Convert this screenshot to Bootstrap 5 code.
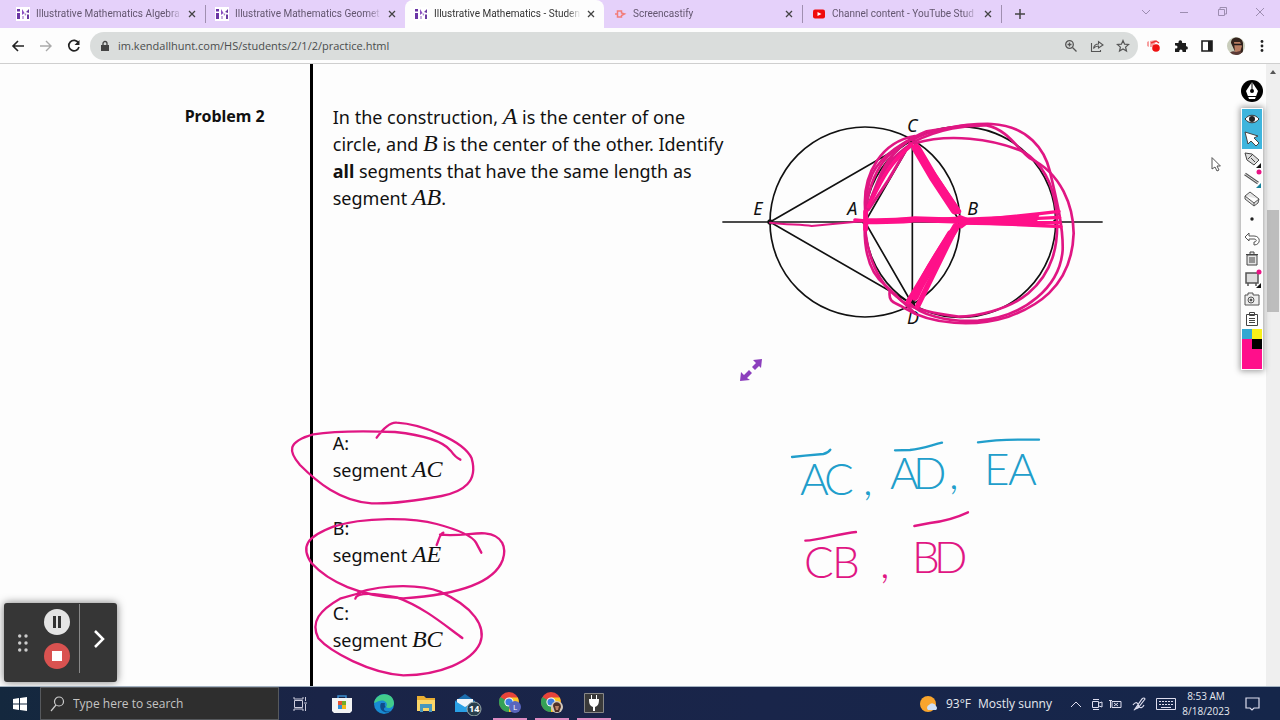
<!DOCTYPE html>
<html lang="en">
<head>
<meta charset="utf-8">
<meta name="viewport" content="width=device-width, initial-scale=1">
<title>Illustrative Mathematics - Students | Kendall Hunt</title>
<link rel="stylesheet" href="https://cdn.jsdelivr.net/npm/bootstrap@5.3.0/dist/css/bootstrap.min.css">
<script src="https://cdn.jsdelivr.net/npm/bootstrap@5.3.0/dist/js/bootstrap.bundle.min.js"></script>
<style>
  body { font-family: "Noto Sans", sans-serif; color: #111; background: #fdfdfd; }
  button { border: 0; background: none; padding: 0; color: inherit; display: inline-flex; align-items: center; justify-content: center; }
  svg { display: block; flex: none; }

  .tabstrip { background: #e5d1fa; height: 28px; padding-left: 7px; }
  .tabitem { flex: 0 0 199px; min-width: 0; padding: 0 5px 0 9px; font: 10px/28px Roboto, sans-serif; }
  .tabitem a { color: #63566f; text-decoration: none; overflow: hidden; white-space: nowrap; margin: 0 2px 0 6px; flex: 1 1 0; min-width: 0; -webkit-mask-image: linear-gradient(90deg, #000 90%, transparent); mask-image: linear-gradient(90deg, #000 90%, transparent); }
  .tabitem.current { background: #fdfdfd; border-radius: 8px 8px 0 0; }
  .tabitem.current a { color: #333; }
  .tabitem.ruled { border-right: 1px solid #a08fb0; border-image: linear-gradient(transparent 20%, #a08fb0 20%, #a08fb0 80%, transparent 80%) 1; }
  .tabitem button { width: 16px; height: 16px; color: #444; }
  .winbtns { gap: 22px; padding-right: 12px; color: #9d8db0; }
  .winbtns button { width: 16px; height: 16px; }

  .toolbar { height: 36px; padding: 0 10px; border-bottom: 1px solid #cfcfcf; color: #222; }
  .address { background: #dadddc; border-radius: 14px; height: 28px; padding: 0 8px 0 10px; margin-left: 8px; color: #555; }
  .address input { border: 0; background: none; outline: 0; font: 11px/20px "Open Sans", sans-serif; color: #4a4d4d; min-width: 0; padding: 0; }

  .page { min-height: 0; }
  .sidecol { flex: 0 0 24.2%; padding: 40px 45px 0 0; text-align: right; font: 700 16px/25px "Noto Sans", sans-serif; }
  .bodycol { border-left: 3px solid #000; padding: 40px 0 0 20px; font-size: 18px; line-height: 27px; min-width: 0; }
  .question { flex: 0 0 400px; margin: 0 -11px 0 0; }
  .statement { min-height: 326px; }
  .choices li { margin-bottom: 31px; }
  .math { font: italic 24px/20px "Liberation Serif", serif; }
  .scroller { flex: 0 0 14px; background: #efefef; padding: 5px 1px; }
  .thumb { height: 102px; background: #bdbdbd; margin-top: 136px; }
  .ink { inset: 0; width: 100%; pointer-events: none; }

  .pens { top: 14px; right: 17px; width: 22px; }
  .palette { background: #fdfdfd; box-shadow: 0 0 6px 1px #999; padding: 1px; }
  .palette button { width: 20px; height: 20px; color: #444; }
  .palette .on { background: #3eb5dd; }
  .swatches { display: grid; grid-template-columns: 10px 10px; grid-auto-rows: 10px; background: #ff0f8b; height: 40px; }

  .recorder { left: 4px; bottom: 4px; width: 113px; height: 79px; background: #363636; border-radius: 3px; box-shadow: 0 0 9px #777; }
  .recorder .grip { margin: 0 16px 0 14px; }
  .recorder .controls { padding: 5px 9px 4px 0; margin: 0 13px 8px 0; border-right: 1px solid #888; }
  .recorder .round { width: 26px; height: 26px; border-radius: 50%; background: #e4e4e4; }
  .recorder .stop { background: #d95250; }

  .taskbar { background: linear-gradient(90deg, #14283e, #1a2447 25%, #19254a 60%, #15264a); height: 34px; border-top: 1px solid #a4b3c2; color: #e6e9ef; }
  .startbtn { width: 40px; height: 33px; }
  .searchbox { width: 239px; height: 33px; background: #2e2e2e; border: 1px solid #56595d; padding-left: 8px; }
  .searchbox input { border: 0; background: none; outline: 0; color: #ddd; font: 12px/20px "Open Sans", sans-serif; width: 180px; margin-left: 8px; padding: 0; }
  .searchbox input::placeholder { color: #c4c4c4; opacity: 1; }
  .app { width: 42px; height: 33px; padding: 0 4px; }
  .app button { width: 34px; height: 33px; }
  .app.open button { border-bottom: 2px solid #dd8bc1; }
  .weather { font: 12px/20px "Open Sans", sans-serif; gap: 7px; margin-right: 18px; }
  .tray { gap: 5px; margin-right: 3px; }
  .clock { font: 10px/15px "Open Sans", sans-serif; width: 54px; }
  .notice { margin: 0 20px 0 12px; }
</style>
</head>
<body class="vh-100 d-flex flex-column overflow-hidden">
<svg width="0" height="0" class="position-absolute" aria-hidden="true">
  <symbol id="im" viewBox="0 0 14 14"><path fill="#fff" d="M0 0h14v14H0z"/><path fill="#6a35a5" d="M1 6h3v6H1zM1 2h3v2.500H1z"/><path fill="#8b4fc0" d="M6 2l2.500 4L6 8z"/><path fill="#c9b0e0" d="M6 9h2v3H6z"/><path fill="#6a3a9f" d="M13 2v4l-3-1zM11 7.500h2V12h-2z"/><path fill="#a57fcb" d="m8.500 6 2 1-1.500 2z"/></symbol>
  <symbol id="cross" viewBox="0 0 8 8"><path d="m1 1 6 6M7 1 1 7" fill="none" stroke="currentColor" stroke-width="1.300"/></symbol>
  <symbol id="chrome" viewBox="0 0 20 20"><circle cx="10" cy="10" r="10" fill="#e7443a"/><path d="M10 10 1.300 5A10 10 0 0 0 10 20l5-8z" fill="#35a156"/><path d="M10 10 10 20A10 10 0 0 0 18.700 5.500H10z" fill="#fbc926"/><circle cx="10" cy="10" r="4.600" fill="#fff"/><circle cx="10" cy="10" r="3.600" fill="#3d7de0"/></symbol>
</svg>

<nav class="tabstrip d-flex align-items-stretch" aria-label="Tabs">
  <div class="tabitem ruled d-flex align-items-center"><svg width="14" height="14"><use href="#im"/></svg><a href="#">Illustrative Mathematics Algebra</a><button aria-label="Close tab"><svg width="8" height="8"><use href="#cross"/></svg></button></div>
  <div class="tabitem d-flex align-items-center"><svg width="14" height="14"><use href="#im"/></svg><a href="#">Illustrative Mathematics Geomet</a><button aria-label="Close tab"><svg width="8" height="8"><use href="#cross"/></svg></button></div>
  <div class="tabitem current d-flex align-items-center"><svg width="14" height="14"><use href="#im"/></svg><a href="#">Illustrative Mathematics - Studen</a><button aria-label="Close tab"><svg width="8" height="8"><use href="#cross"/></svg></button></div>
  <div class="tabitem ruled d-flex align-items-center"><svg width="14" height="14" fill="none" stroke="#f27d79" stroke-width="1.500"><path d="M4.500 4h4v2l3 1-3 1.500V10h-4zM2 7h2"/></svg><a href="#">Screencastify</a><button aria-label="Close tab"><svg width="8" height="8"><use href="#cross"/></svg></button></div>
  <div class="tabitem ruled d-flex align-items-center"><svg width="14" height="14"><rect x="1" y="2.500" width="12" height="9" rx="2" fill="#f00b0b"/><path d="m5.500 5 4 2-4 2z" fill="#fff"/></svg><a href="#">Channel content - YouTube Stud</a><button aria-label="Close tab"><svg width="8" height="8"><use href="#cross"/></svg></button></div>
  <button class="ms-2 px-1" aria-label="New tab"><svg width="12" height="12" stroke="#444" stroke-width="1.500"><path d="M6 1v10M1 6h10"/></svg></button>
  <div class="winbtns ms-auto d-flex align-items-center pb-1">
    <button aria-label="Search tabs"><svg width="10" height="10" fill="none" stroke="currentColor"><path d="m1 3 4 4 4-4"/></svg></button>
    <button aria-label="Minimize"><svg width="10" height="10" stroke="currentColor"><path d="M1 5.500h8"/></svg></button>
    <button aria-label="Restore"><svg width="10" height="10" fill="none" stroke="currentColor"><path d="M1.500 2.500h6v6h-6zM3 2V.5h6.500V7H8"/></svg></button>
    <button aria-label="Close window"><svg width="10" height="10" stroke="currentColor"><path d="m1 1 8 8M9 1 1 9"/></svg></button>
  </div>
</nav>

<div class="toolbar d-flex align-items-center">
  <button class="me-2" aria-label="Back"><svg width="16" height="16" fill="none" stroke="#222" stroke-width="1.600"><path d="M14 8H3M8 3 3 8l5 5"/></svg></button>
  <button class="ms-1 me-2" aria-label="Forward"><svg width="16" height="16" fill="none" stroke="#aaa" stroke-width="1.400"><path d="M2 8h11M8 3l5 5-5 5"/></svg></button>
  <button class="ms-1" aria-label="Reload"><svg width="16" height="16" fill="none" stroke="#222" stroke-width="1.700"><path d="M12.500 5A5.200 5.200 0 1 0 13 9"/><path d="M13.500 2v5h-5z" fill="#222" stroke="none"/></svg></button>
  <div class="address d-flex align-items-center flex-grow-1 gap-2">
    <svg width="10" height="12"><path d="M1 5h8v6H1z" fill="#444"/><path d="M3 5V3.500a2 2 0 0 1 4 0V5" fill="none" stroke="#444" stroke-width="1.300"/></svg>
    <input class="flex-grow-1" aria-label="Address" value="im.kendallhunt.com/HS/students/2/1/2/practice.html">
    <button class="me-1" aria-label="Zoom"><svg width="14" height="14" fill="none" stroke="currentColor" stroke-width="1.300"><circle cx="5.500" cy="5.500" r="3.800"/><path d="m8.500 8.500 4 4M3.500 5.500h4M5.500 3.500v4"/></svg></button>
    <button class="me-1" aria-label="Share"><svg width="14" height="14" fill="none" stroke="currentColor" stroke-width="1.100"><path d="M1.500 4v8.500h9V11M3.500 9.500c.5-3 2.500-4.500 5-4.500V2.500L13 6 8.500 9V7c-2 0-3.500.5-5 2.500z"/></svg></button>
    <button aria-label="Bookmark"><svg width="14" height="14" fill="none" stroke="currentColor" stroke-width="1.200"><path d="m7 1.500 1.600 3.700 4 .3-3 2.600.9 4L7 10l-3.500 2.100.9-4-3-2.600 4-.3z"/></svg></button>
  </div>
  <div class="d-flex align-items-center ms-2 gap-2">
    <button class="me-1" aria-label="Recording extension"><svg width="16" height="16"><path d="m1 4 2-1v6L1 8zM4 3l5-1 1 2-4 5-2 0z" fill="#f7a0a0"/><path d="m5 5 5-2 3 2" stroke="#e33" fill="none" stroke-width="1.500"/><circle cx="10" cy="10" r="3.800" fill="#ee1212"/></svg></button>
    <button class="me-1" aria-label="Extensions"><svg width="14" height="14" fill="#1d1d1d"><path d="M1 4h3.500V3a1.800 1.800 0 0 1 3.600 0v1H12v3.300h.3a1.600 1.600 0 0 1 0 3.200H12V13H8.500v-1a1.600 1.600 0 0 0-3.200 0v1H1V9.500h1a1.500 1.500 0 0 0 0-3H1z"/></svg></button>
    <button class="me-1" aria-label="Side panel"><svg width="14" height="14"><path d="M2 2h10v10H2z" fill="none" stroke="#1d1d1d" stroke-width="1.600"/><path d="M8 2h4v10H8z" fill="#1d1d1d"/></svg></button>
    <button aria-label="Profile"><svg width="20" height="20"><clipPath id="face"><circle cx="10" cy="10" r="9"/></clipPath><g clip-path="url(#face)"><path fill="#c9cdbb" d="M0 0h20v20H0z"/><path fill="#34241d" d="M5 7c0-8 13-7 12 2v11h-6z"/><path fill="#b97d61" d="M8 6h6l2 4-2 6H9z"/><path stroke="#211b1a" stroke-width="1.500" d="M8 8.500h8"/><path fill="#5b3a36" d="M3 20c1-6 5-5 7-4l4-1 6 5z"/></g></svg></button>
    <button aria-label="Menu"><svg width="16" height="16" fill="#222"><circle cx="8" cy="3.500" r="1.400"/><circle cx="8" cy="8" r="1.400"/><circle cx="8" cy="12.500" r="1.400"/></svg></button>
  </div>
</div>

<main class="page position-relative flex-grow-1 d-flex overflow-hidden">
  <h2 class="sidecol mb-0">Problem 2</h2>
  <section class="bodycol flex-grow-1">
    <div class="statement d-flex">
      <p class="question">In the construction, <span class="math">A</span> is the center of one circle, and <span class="math">B</span> is the center of the other. Identify <strong>all</strong> segments that have the same length as segment <span class="math">AB</span>.</p>
      <svg width="381" height="240" viewBox="21 12 1143 720" role="img" aria-label="Two overlapping circles centered at A and B" fill="none" stroke="#111" stroke-width="5">
        <circle cx="450" cy="366" r="285"/><circle cx="736" cy="366" r="286"/>
        <path d="M22 366H1163M592 120V612M165 366 592 120 450 366 592 612zM592 120 735 366 592 612"/>
        <g fill="#111" stroke="none"><circle cx="165" cy="366" r="8"/><circle cx="450" cy="366" r="8"/><circle cx="592" cy="120" r="8"/><circle cx="592" cy="612" r="8"/><circle cx="1022" cy="366" r="8"/>
        <g font-family="Noto Sans, sans-serif" font-style="italic" font-size="54"><text x="576" y="97">C</text><text x="115" y="345">E</text><text x="397" y="345">A</text><text x="757" y="345">B</text><text x="576" y="673">D</text></g></g>
      </svg>
    </div>
    <ul class="choices list-unstyled mb-0">
      <li>A:<br>segment <span class="math">AC</span></li>
      <li>B:<br>segment <span class="math">AE</span></li>
      <li>C:<br>segment <span class="math">BC</span></li>
    </ul>
  </section>
  <div class="scroller" aria-hidden="true"><svg width="12" height="5"><path d="m3 5 3-4 3 4z" fill="#555"/></svg><div class="thumb"></div></div>

  <!-- Freehand pen annotations laid over the page -->
  <svg class="ink position-absolute" viewBox="0 64 1280 622" preserveAspectRatio="xMinYMin meet" fill="none" stroke="#e01683" stroke-linecap="round" stroke-linejoin="round">
    <g transform="translate(715 100) scale(.33333)" stroke-width="8">
      <path d="M592 120C640 92 740 70 830 72C940 78 990 150 1005 215C1025 300 1045 380 1043 450C1035 560 930 650 790 662C690 668 610 640 585 610"/>
      <path d="M592 128C670 85 760 75 815 76C880 90 905 145 945 175C1040 220 1075 320 1076 400C1070 570 950 625 880 650C780 682 650 675 570 625C540 605 520 610 524 575"/>
      <path d="M600 130C700 100 830 115 925 155C990 195 1015 260 1024 330C1035 440 1010 520 940 580C880 630 780 650 730 650C650 640 620 630 600 622"/>
      <path d="M600 108C500 125 445 220 450 320L452 400C460 470 490 550 545 590C570 615 590 620 610 626"/>
      <path d="M590 118C525 150 470 200 452 330C440 450 465 520 510 555L600 640"/>
      <path d="M455 330C450 240 480 190 535 150C565 130 590 112 635 94L750 76"/>
      <path d="M462 310C500 210 530 170 592 130M458 320C490 250 500 180 575 125M460 330 520 240 585 130" stroke-width="9"/>
      <path d="M165 368C220 375 260 372 290 378L440 364" stroke-width="6"/>
      <g stroke="#ff1089">
        <path d="M460 320C495 250 520 190 590 135M420 360C500 372 560 350 630 360L735 355" stroke-width="11"/>
        <path d="M460 364C530 362 560 364 600 358L740 362" stroke-width="18"/>
        <path d="M452 335V388" stroke-width="15"/>
        <path d="M600 142 730 334" stroke-width="17"/><path d="M604 145 655 232 720 330" stroke-width="27"/>
        <path d="M723 380C715 400 655 470 600 590" stroke-width="23"/><path d="M722 385 608 618M704 400 580 605" stroke-width="16"/>
        <path d="M735 352 760 362 738 378z" stroke-width="14"/>
        <path d="M740 364C850 355 940 345 1032 334M740 366 1038 380M740 366 1034 352M740 368 1034 368" stroke-width="10"/>
        <path d="M740 356 880 350 970 346 960 376 740 372z" fill="#ff1089" stroke-width="5"/>
      </g>
    </g>
    <g transform="translate(280 410) scale(.33333)" stroke-width="7">
      <path d="M290 83C310 55 330 36 350 38C420 42 550 90 575 145C595 215 550 245 485 258C420 270 330 282 275 280C180 275 110 215 60 165C25 125 20 95 100 73C180 60 290 64 345 66C430 75 490 95 512 122Q527 143 541 149"/>
      <path d="M470 405C478 385 480 370 490 368M480 374C540 380 580 367 615 370C670 375 680 415 668 450C640 525 520 555 370 565C240 560 145 515 95 460C60 410 80 380 160 350C250 320 400 322 470 342C530 358 575 375 588 398L604 428"/>
      <path d="M226 566C229 545 290 550 350 562C430 590 500 650 547 684M235 548C320 520 430 525 480 545C580 590 620 650 600 700C575 755 480 795 370 796C270 790 150 725 115 685C90 635 120 600 180 566L240 549"/>
    </g>
    <g transform="translate(780 425) scale(.33333)" stroke-width="7">
      <g stroke="#219ecb"><path d="M36 96 75 92 130 87Q145 84 151 74M345 76 390 75C430 70 455 60 486 53M594 52C650 44 710 43 777 44"/></g>
      <path d="M76 347C120 345 180 325 228 321M403 303 450 294C500 288 530 278 564 262"/>
    </g>
    <g font-family="Lato, sans-serif" font-weight="300" font-size="44" stroke="none">
      <g fill="#219ecb"><text x="800 824 863" y="495">AC,</text><text x="890 913 949" y="489">AD,</text><text x="984 1008" y="485">EA</text></g>
      <g fill="#e01683"><text x="804 832 880" y="578">CB,</text><text x="912 934" y="573">BD</text></g>
    </g>
    <path d="m740 381 1-9 3 3 5-5 3 3-5 5 3 2zM762 359l-9 1 3 3-4 4 3 3 4-4 2 2z" fill="#8c3fbd" stroke="none"/>
    <path d="m1212 158v11l3-2 2 4 2-1-2-4h3z" fill="#fff" stroke="#555"/>
  </svg>

  <aside class="pens position-absolute" aria-label="Drawing tools">
    <button class="mb-1" aria-label="Toggle drawing"><svg width="22" height="24"><circle cx="11" cy="13" r="11" fill="#000"/><path d="m11 4 6 9-3 8H8l-3-8z" fill="#fff"/><path d="M11 4v8M7 18.500h8" stroke="#000"/><circle cx="11" cy="13" r="2"/></svg></button>
    <div class="palette d-flex flex-column">
      <button class="on" aria-label="Show ink"><svg width="16" height="16"><path d="M1 8c4-5 10-5 14 0-4 5-10 5-14 0z" fill="#fff" stroke="#333"/><circle cx="8" cy="8" r="3" fill="#222"/></svg></button>
      <button class="on" aria-label="Select"><svg width="16" height="16"><path d="m1 1 3 12 3-3 5 5 3-3-5-5 4-2z" fill="#fff" stroke="#444"/></svg></button>
      <button aria-label="Pencil"><svg width="18" height="18" fill="#ddd" stroke="#444"><path d="m2 3 7 1 7 6-5 5-7-5zM5 9l5-5M8 8l4 4"/><path d="M18 13v5h-5z" fill="#111" stroke="none"/></svg></button>
      <button aria-label="Line"><svg width="20" height="20"><path d="m3 5 13 9" stroke="#555" stroke-width="3"/><path d="m3 5 13 9" stroke="#ddd"/><circle cx="17" cy="3" r="2.500" fill="#e91384"/><path d="M19 14v5h-5z" fill="#17829b"/></svg></button>
      <button aria-label="Eraser"><svg width="18" height="18" fill="#e4e4e4" stroke="#555"><path d="m2 6 5-4 9 7-1 4-4 3-9-7zM2 6l9 7 5-4M11 13v3"/></svg></button>
      <button aria-label="Line width"><svg width="6" height="6"><circle cx="3" cy="3" r="1.700" fill="#222"/></svg></button>
      <button aria-label="Undo"><svg width="18" height="16" fill="#fff" stroke="#555"><path d="M6 2 2 6l4 4V8h5c3 0 3 3 0 3v3c7 0 7-9 0-9H6z"/></svg></button>
      <button aria-label="Clear"><svg width="14" height="16" fill="#e4e4e4" stroke="#444"><path d="M2 4h10v10H2zM1 3.500h12M5 3V1h4v2M5 6v6M7 6v6M9 6v6"/></svg></button>
      <button aria-label="Whiteboard"><svg width="20" height="20" fill="#ddd" stroke="#555" stroke-width="1.500"><path d="M4 4h12v10H4zM6 14v3M14 14v3"/><circle cx="17" cy="3" r="2.500" fill="#e91384" stroke="none"/><path d="M19 14v5h-5z" fill="#111" stroke="none"/></svg></button>
      <button aria-label="Screenshot"><svg width="16" height="14" fill="#eee" stroke="#555"><path d="M1 3h3V1h5v2h6v10H1z"/><circle cx="7" cy="8" r="3"/><circle cx="7" cy="8" r="1" fill="#222"/></svg></button>
      <button aria-label="Clipboard"><svg width="14" height="16" fill="#fff" stroke="#444"><path d="M1.500 3.500h11v11h-11zM4.500 1.500h5v3h-5zM4 7.500h6M4 9.500h6M4 11.500h6"/></svg></button>
      <div class="swatches"><button class="w-100 h-100" style="background:#35a8d2" aria-label="Blue"></button><button class="w-100 h-100" style="background:#f8ef18" aria-label="Yellow"></button><button class="w-100 h-100" aria-label="Pink"></button><button class="w-100 h-100" style="background:#000" aria-label="Black"></button></div>
    </div>
  </aside>

  <aside class="recorder position-absolute d-flex align-items-center" aria-label="Screen recorder">
    <svg class="grip" width="10" height="20" fill="#ccc"><circle cx="1.700" cy="3" r="1.700"/><circle cx="8" cy="3" r="1.700"/><circle cx="1.700" cy="10" r="1.700"/><circle cx="8" cy="10" r="1.700"/><circle cx="1.700" cy="17" r="1.700"/><circle cx="8" cy="17" r="1.700"/></svg>
    <div class="controls d-flex flex-column gap-2">
      <button class="round" aria-label="Pause"><svg width="10" height="12" fill="#333"><path d="M1 0h3v12H1zM6 0h3v12H6z"/></svg></button>
      <button class="round stop" aria-label="Stop"><svg width="10" height="10"><path d="M0 0h10v10H0z" fill="#fff"/></svg></button>
    </div>
    <button class="mb-2" aria-label="Collapse"><svg width="12" height="20" fill="none" stroke="#fff" stroke-width="2.500"><path d="m2 2 8 8-8 8"/></svg></button>
  </aside>
</main>

<footer class="taskbar d-flex align-items-center flex-shrink-0">
  <button class="startbtn" aria-label="Start"><svg width="14" height="14" fill="#fff"><path d="m0 2 6-1v5.500H0zM7 1l7-1v6.500H7zM0 7.500h6V13l-6-1zM7 7.500h7V14l-7-1z"/></svg></button>
  <label class="searchbox d-flex align-items-center"><svg width="16" height="16" fill="none" stroke="#ccc" stroke-width="1.200"><circle cx="10" cy="5.500" r="4.500"/><path d="m7 9-5 6"/></svg><input type="search" placeholder="Type here to search" aria-label="Search"></label>
  <div class="app"><button aria-label="Task view"><svg width="16" height="16" fill="none" stroke="#ccd"><path d="M2.500 4.500h8v7h-8zM2 1v2h9V1M2 15v-2h9v2M13.500 1v4M13.500 8v7M12 7h3"/></svg></button></div>
  <div class="app"><button aria-label="Store"><svg width="20" height="20"><path d="M6 5V2h8v3" fill="none" stroke="#3e8ed0" stroke-width="1.500"/><path d="M0 4h20v13l-2 2H2l-2-2z" fill="#f2f3f4"/><path fill="#e65332" d="M6 7h4v4H6z"/><path fill="#72ad28" d="M10 7h4v4h-4z"/><path fill="#2f8ed8" d="M6 11h4v4H6z"/><path fill="#f5b91b" d="M10 11h4v4h-4z"/></svg></button></div>
  <div class="app"><button aria-label="Edge"><svg width="20" height="20"><circle cx="10" cy="10" r="10" fill="#188bd2"/><path d="M0 9C2-2 19-3 20 9c0 5-6 6-8 4 3-4-2-8-7-6-3 1-4 2-5 2z" fill="#42cc8b"/><path d="M7 9c-3 6 3 12 10 8-7 2-9-3-5-4-2-1-1-4-1-4z" fill="#0f4c8a"/></svg></button></div>
  <div class="app"><button aria-label="File Explorer"><svg width="20" height="18"><path d="M1 1h7l2 2h9v13H1z" fill="#e9ae32"/><path d="M1 5h18v11H1z" fill="#fbd669"/><path d="M4 17V9h12v8h-3v-4H7v4z" fill="#4897bd"/></svg></button></div>
  <div class="app"><button aria-label="Mail"><svg width="28" height="24"><path d="m1 9 10-7 10 7v11H1z" fill="#1c6eae"/><path d="M3 7h16v6l-8 4-8-4z" fill="#f2f6fa"/><path d="m1 9 10 6 10-6v11H1z" fill="#29a0e5"/><circle cx="20" cy="17" r="7" fill="#283f4d" stroke="#9aa"/><text x="15" y="20" font-family="Open Sans, sans-serif" font-size="9" font-weight="700" fill="#fff">14</text></svg></button></div>
  <div class="app open"><button aria-label="Chrome, profile L"><svg width="22" height="22"><use href="#chrome" width="20" height="20"/><circle cx="16" cy="15" r="6" fill="#5965bd"/><text x="14" y="18" font-family="Open Sans, sans-serif" font-size="8" fill="#fff">L</text></svg></button></div>
  <div class="app open"><button aria-label="Chrome"><svg width="22" height="22"><use href="#chrome" width="20" height="20"/><circle cx="16" cy="15" r="6" fill="#d3c9bc"/><path d="M12 14c0-5 8-5 8 1l-2 5h-4z" fill="#503128"/><path d="M14 14h4l-1 4h-2z" fill="#bd8263"/></svg></button></div>
  <div class="app open"><button aria-label="Drawing app"><svg width="20" height="20"><path d="M.5.5h19v19H.5z" fill="#3a3a3a" stroke="#888"/><path d="M5 6h10c0 5-1 7-4 8v4H9v-4c-3-1-4-3-4-8zM7 2h1v4H7zM12 2h1v4h-1z" fill="#fff"/></svg></button></div>
  <div class="weather ms-auto d-flex align-items-center"><svg width="20" height="18"><circle cx="9" cy="9" r="8" fill="#f9a52d"/><path d="M9 15a3 3 0 0 1 1-5 4 4 0 0 1 7 1 2.500 2.500 0 0 1 0 4z" fill="#cfe0f5"/></svg><span>93°F</span><span>Mostly sunny</span></div>
  <div class="tray d-flex align-items-center">
    <button aria-label="Hidden icons"><svg width="12" height="10" fill="none" stroke="#dde"><path d="m1 8 5-5 5 5"/></svg></button>
    <button class="ms-1" aria-label="Meet now"><svg width="12" height="14" fill="none" stroke="#dde"><path d="M1.500 4.500h6v6h-6zM8 6l3-1v5L8 9M2 2.500h6M2 12.500h6"/></svg></button>
    <button aria-label="Battery"><svg width="15" height="12" fill="none" stroke="#dde"><path d="M4 3.500h9v6H4zM6 5l4 3M10 5 6 8M2.500 3v7M1 2.500h3"/></svg></button>
    <button class="ms-1" aria-label="Pen"><svg width="15" height="16" fill="none" stroke="#dde" stroke-width="1.200"><path d="M3 13 10 3q2-2 3 0L6 12zM1 9q3-4 5-1t-4 6M7 11q3 2 5-2"/></svg></button>
    <button class="ms-1" aria-label="Keyboard"><svg width="20" height="14" fill="none" stroke="#dde"><path d="M.5 1.500h19v11H.5z"/><path d="M3 4.500h14M3 7.500h14" stroke-dasharray="2 1"/><path d="M5 10.500h10"/></svg></button>
  </div>
  <div class="clock text-center"><div>8:53 AM</div><div>8/18/2023</div></div>
  <button class="notice" aria-label="Notifications"><svg width="15" height="16" fill="none" stroke="#dde" stroke-width="1.200"><path d="M1 2h13v10H9l-2 2-2-2H1z"/></svg></button>
</footer>
</body>
</html>
